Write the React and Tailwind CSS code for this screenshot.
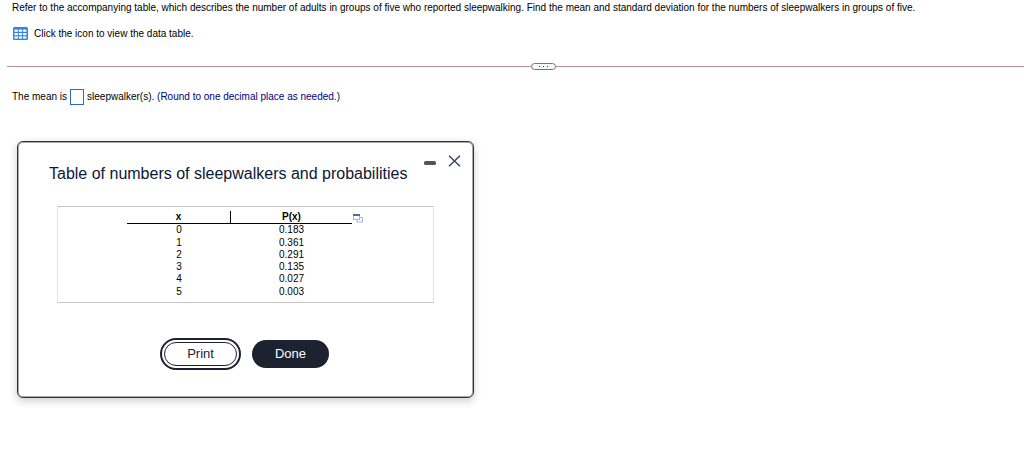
import { useState } from 'react';

const rows = [
    { x: 0, p: '0.183' },
    { x: 1, p: '0.361' },
    { x: 2, p: '0.291' },
    { x: 3, p: '0.135' },
    { x: 4, p: '0.027' },
    { x: 5, p: '0.003' },
];

function TableIcon() {
    return (
        <svg width="15" height="13" viewBox="0 0 15 13" aria-hidden="true">
            <rect width="15" height="13" rx="1.5" fill="#3585dc" />
            {[1.5, 5.8, 10.1].map((x) =>
                [2.6, 6, 9.4].map((y) => (
                    <rect key={`${x}-${y}`} x={x} y={y} width="3.3" height="2.2" fill="#fff" />
                ))
            )}
        </svg>
    );
}

function CopyIcon() {
    return (
        <svg width="10" height="9" viewBox="0 0 10 9" aria-hidden="true">
            <rect x="4" y="3.5" width="5.5" height="4.5" fill="#fff" stroke="#a9b6dc" />
            <rect x="0.5" y="0.5" width="6" height="5" fill="#fff" stroke="#a9b6dc" />
            <rect width="7" height="2" fill="#5566ad" />
        </svg>
    );
}

function DataDialog() {
    return (
        <section
            role="dialog"
            aria-labelledby="dialog-title"
            className="w-full max-w-[457px] rounded-md border border-[#333] bg-white pt-px pb-[27px] shadow-[inset_0_0_0_1px_#aaa,0_3px_8px_rgba(0,0,0,0.2)]"
        >
            <header className="flex justify-between pt-2 pr-3 pl-[31px]">
                <h2 id="dialog-title" className="pt-[13px] text-[16px] leading-5 text-[#0b1736]">
                    Table of numbers of sleepwalkers and probabilities
                </h2>
                <div className="flex h-5 items-center gap-3">
                    <button type="button" aria-label="Minimize" className="pt-1">
                        <svg width="12" height="4" viewBox="0 0 12 4">
                            <rect width="12" height="4" rx="1.5" fill="#50555b" />
                        </svg>
                    </button>
                    <button type="button" aria-label="Close">
                        <svg width="13" height="12" viewBox="0 0 13 12" fill="none" stroke="#33435a" strokeWidth="1.4">
                            <path d="M1 .8 12 11.2M12 .8 1 11.2" />
                        </svg>
                    </button>
                </div>
            </header>

            <div className="mx-[39px] mt-[22px] flex items-start border-x border-y border-x-[#e4e4e4] border-y-[#c4c4c4] pt-1 pb-1 pl-[69px]">
                <table className="h-[87px] w-[225px] table-fixed border-collapse text-center text-[10px] leading-3">
                    <thead>
                        <tr className="border-b border-black">
                            <th scope="col" className="h-3 p-0 font-bold">
                                <div className="border-r border-black">x</div>
                            </th>
                            <th scope="col" className="h-3 w-[121px] p-0 font-bold">P(x)</th>
                        </tr>
                    </thead>
                    <tbody>
                        {rows.map((row) => (
                            <tr key={row.x}>
                                <td className="p-0">{row.x}</td>
                                <td className="p-0">{row.p}</td>
                            </tr>
                        ))}
                    </tbody>
                </table>
                <button type="button" aria-label="Copy table" className="mt-[3px] ml-px">
                    <CopyIcon />
                </button>
            </div>

            <footer className="mt-[35px] flex items-center justify-center gap-[11px] pr-[2px] text-[13px]">
                <button type="button" className="rounded-full border-2 border-[#1c2230] p-[2px] text-[#1c2230]">
                    <span className="block h-6 w-[73px] rounded-full border border-[#1c2230] leading-[22px]">Print</span>
                </button>
                <button type="button" className="h-7 w-[77px] rounded-full bg-[#1c2230] text-white">
                    Done
                </button>
            </footer>
        </section>
    );
}

export default function App() {
    const [mean, setMean] = useState('');

    return (
        <main className="min-h-screen bg-white font-['Liberation_Sans',Arial,sans-serif] text-[10px] leading-3 text-black">
            <div className="px-3 pt-[2px]">
                <p>
                    Refer to the accompanying table, which describes the number of adults in groups of five who reported
                    sleepwalking. Find the mean and standard deviation for the numbers of sleepwalkers in groups of five.
                </p>
                <button type="button" className="mt-[13px] flex items-center gap-[6px] pl-px">
                    <TableIcon />
                    <span>Click the icon to view the data table.</span>
                </button>
            </div>

            {/* Divider with expand handle */}
            <div className="mt-[23px] ml-[7px] flex items-center">
                <div className="h-px grow bg-[#c08c9c]" />
                <button
                    type="button"
                    aria-label="Show more"
                    className="flex h-[7px] w-[25px] items-center justify-center gap-[3px] rounded-full border border-[#6b7787] bg-[#f4f8fc]"
                >
                    <span className="size-px bg-[#333]" />
                    <span className="size-px bg-[#333]" />
                    <span className="size-px bg-[#333]" />
                </button>
                <div className="h-px w-[468px] bg-[#c08c9c]" />
            </div>

            <div className="mt-[19px] flex items-center px-3">
                <label htmlFor="mean">The mean is</label>
                <input
                    id="mean"
                    type="text"
                    value={mean}
                    onChange={(e) => setMean(e.target.value)}
                    className="mx-[3px] h-4 w-[14px] border border-[#3366cc] outline-none"
                />
                <span>
                    sleepwalker(s). <span className="text-[#000080]">(Round to one decimal place as needed.)</span>
                </span>
            </div>

            <div className="mt-9 px-[17px]">
                <DataDialog />
            </div>
        </main>
    );
}
